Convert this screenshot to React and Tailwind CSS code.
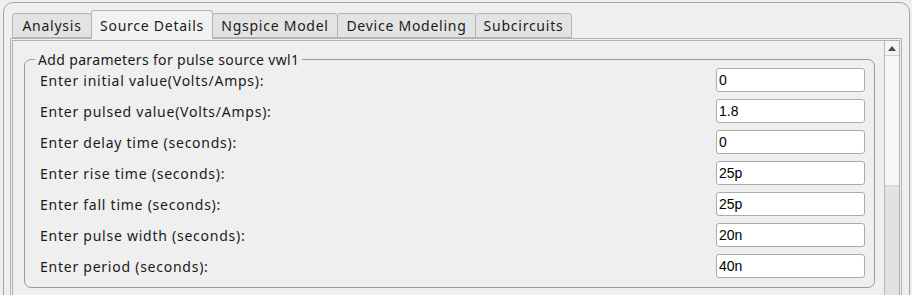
const FONT = { fontFamily: '"Noto Sans", "Open Sans", sans-serif', letterSpacing: '0.75px' };

const TABS = [
  ['Analysis', 'w-[80px]'],
  ['Source Details', 'w-[122px]'],
  ['Ngspice Model', 'w-[126px]'],
  ['Device Modeling', 'w-[139px]'],
  ['Subcircuits', 'w-[97px]'],
];
const ACTIVE = 'Source Details';

const FIELDS = [
  ['Enter initial value(Volts/Amps):', '0'],
  ['Enter pulsed value(Volts/Amps):', '1.8'],
  ['Enter delay time (seconds):', '0'],
  ['Enter rise time (seconds):', '25p'],
  ['Enter fall time (seconds):', '25p'],
  ['Enter pulse width (seconds):', '20n'],
  ['Enter period (seconds):', '40n'],
];

function Tab({ label, w }) {
  const active = label === ACTIVE;
  return (
    <div
      className={`${w} flex items-center justify-center border border-[#b4b4b4] rounded-t-[3px] text-[14px] text-[#1a1a1a] ${
        active
          ? 'h-[29px] bg-[#f2f2f2] border-b-0 -mb-[1px] -ml-[1px] relative z-10'
          : 'h-[25px] bg-[#e3e3e3] -ml-[1px] first:ml-0'
      }`}
    >
      {label}
    </div>
  );
}

function Field({ label, value }) {
  return (
    <div className="flex items-center justify-between h-[24px]">
      <span className="text-[14px] text-[#1a1a1a]">{label}</span>
      <input
        readOnly
        value={value}
        className="w-[149px] h-[24px] bg-white border border-[#ababab] rounded-[3px] px-[2px] text-[14px] text-black outline-none"
        style={{ fontFamily: '"Liberation Sans", Arial, sans-serif', letterSpacing: 0 }}
      />
    </div>
  );
}

export default function App() {
  return (
    <div className="w-[912px] h-[295px] bg-[#efefef] overflow-hidden pt-[2px] pl-[3px]" style={FONT}>
      <div className="w-[907px] h-[330px] border border-[#a4a4a4] rounded-[10px] pt-[7px] pl-[6px]">
        <div className="flex items-end ml-[2px] h-[28px]">
          {TABS.map(([t, w]) => <Tab key={t} label={t} w={w} />)}
        </div>
        <div className="w-[892px] h-[300px] border border-[#b4b4b4] bg-[#efefef] p-[1px]">
          <div className="h-full border border-[#b0b0b0] flex">
            <div className="flex-1 pt-[18px] pl-[11px] pr-[9px]">
              <div className="relative border border-[#9a9a9a] rounded-[7px] pt-[8px] pb-[9px] pl-[15px] pr-[9px] flex flex-col gap-[7px]">
                <span
                  className="absolute -top-[11px] left-[10px] bg-[#efefef] px-[3px] text-[14px] text-[#1a1a1a]"
                  style={{ letterSpacing: '0.35px' }}
                >
                  Add parameters for pulse source vwl1
                </span>
                {FIELDS.map(([l, v]) => <Field key={l} label={l} value={v} />)}
              </div>
            </div>
            <div className="w-[15px] border-l border-[#b8b8b8] bg-[#e2e2e2] flex flex-col">
              <div className="h-[15px] bg-[#f4f4f4] border-b border-[#cfcfcf] flex items-center justify-center">
                <svg width="8" height="5" viewBox="0 0 8 5"><path d="M0 5 L4 0 L8 5 Z" fill="#4a4a4a" /></svg>
              </div>
              <div className="h-[130px] bg-[#f7f7f7] border-b border-[#d6d6d6]" />
            </div>
          </div>
        </div>
      </div>
    </div>
  );
}
